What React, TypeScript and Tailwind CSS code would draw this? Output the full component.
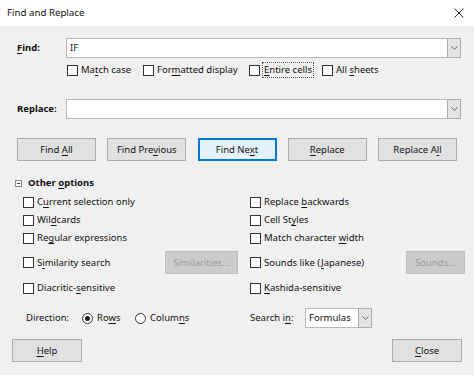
import React from "react";

const U = ({ children }: { children: React.ReactNode }) => (
  <span className="underline underline-offset-[1.5px]">{children}</span>
);

const Box = () => (
  <span className="inline-block w-[11px] h-[11px] shrink-0 border border-[#333333] bg-white" />
);

const Check = ({ children, className = "" }: { children: React.ReactNode; className?: string }) => (
  <div className={"flex items-center gap-[3px] " + className}>
    <Box />
    <span className="leading-none whitespace-nowrap">{children}</span>
  </div>
);

const Radio = ({ on, children }: { on?: boolean; children: React.ReactNode }) => (
  <div className="flex items-center gap-[4px]">
    <span className="w-[11px] h-[11px] shrink-0 rounded-full border border-[#333333] bg-white flex items-center justify-center">
      {on && <span className="w-[5px] h-[5px] rounded-full bg-[#222222]" />}
    </span>
    <span className="leading-none">{children}</span>
  </div>
);

const Btn = ({
  children,
  className = "",
  focus,
  disabled,
}: {
  children: React.ReactNode;
  className?: string;
  focus?: boolean;
  disabled?: boolean;
}) => (
  <div
    className={
      "h-[23px] flex items-center justify-center leading-none whitespace-nowrap " +
      (focus
        ? "bg-[#e5f1fb] border-2 border-[#0078d7] "
        : disabled
        ? "bg-[#cccccc] border border-[#bfbfbf] text-[#9a9a9a] "
        : "bg-[#e1e1e1] border border-[#adadad] ") +
      className
    }
  >
    <span className="leading-none whitespace-nowrap">{children}</span>
  </div>
);

const Chevron = () => (
  <svg width="7" height="4" viewBox="0 0 7 4">
    <polyline points="0.5,0.5 3.5,3.3 6.5,0.5" fill="none" stroke="#606060" strokeWidth="1" />
  </svg>
);

const Combo = ({ value }: { value?: string }) => (
  <div className="flex-1 h-[20px] flex border border-[#b8b8b8] bg-white">
    <div className="flex-1 flex items-center pl-[3px] leading-none">{value}</div>
    <div className="w-[14px] -my-px -mr-px flex items-center justify-center bg-[#e3e3e3] border border-[#adadad]">
      <Chevron />
    </div>
  </div>
);

export default function App() {
  return (
    <div className="w-[474px] h-[375px] bg-[#f0f0f0] text-[#111111] text-[9.5px] font-['Noto_Sans',sans-serif] flex flex-col overflow-hidden">
      {/* Title bar */}
      <div className="h-[26px] bg-white flex items-center justify-between pl-[7px] pr-[10px] shrink-0">
        <span className="text-[9.7px] leading-none">Find and Replace</span>
        <svg width="10" height="10" viewBox="0 0 10 10">
          <line x1="0.5" y1="0.5" x2="9.5" y2="9.5" stroke="#111" strokeWidth="0.9" />
          <line x1="9.5" y1="0.5" x2="0.5" y2="9.5" stroke="#111" strokeWidth="0.9" />
        </svg>
      </div>

      {/* Find row */}
      <div className="mt-[12px] h-[20px] flex items-center pl-[17px] pr-[13px]">
        <span className="w-[49px] font-bold leading-none">
          <U>F</U>ind:
        </span>
        <Combo value="IF" />
      </div>

      {/* Search options row */}
      <div className="mt-[5px] h-[14px] flex items-center pl-[67px]">
        <Check className="w-[76px]">
          Ma<U>t</U>ch case
        </Check>
        <Check className="w-[106px]">
          For<U>m</U>atted display
        </Check>
        <div className="w-[73px] flex items-center gap-[2px]">
          <Box />
          <span className="leading-none whitespace-nowrap border border-dotted border-[#555] px-px py-[2px]">
            <U>E</U>ntire cells
          </span>
        </div>
        <Check>
          All <U>s</U>heets
        </Check>
      </div>

      {/* Replace row */}
      <div className="mt-[22px] h-[20px] flex items-center pl-[17px] pr-[13px]">
        <span className="w-[49px] font-bold leading-none">Replace:</span>
        <Combo />
      </div>

      {/* Buttons row */}
      <div className="mt-[19px] h-[23px] flex justify-between pl-[17px] pr-[17px]">
        <Btn className="w-[79px]">
          Find <U>A</U>ll
        </Btn>
        <Btn className="w-[79px]">
          Find Pre<U>v</U>ious
        </Btn>
        <Btn className="w-[79px]" focus>
          Find Ne<U>x</U>t
        </Btn>
        <Btn className="w-[79px]">
          <U>R</U>eplace
        </Btn>
        <Btn className="w-[79px]">
          Replace A<U>l</U>l
        </Btn>
      </div>

      {/* Other options header */}
      <div className="mt-[15px] h-[14px] flex items-center pl-[15px] gap-[6px]">
        <span className="w-[7px] h-[7px] border border-[#888] bg-white flex items-center justify-center">
          <span className="w-[3px] h-px bg-[#444]" />
        </span>
        <span className="font-bold leading-none">
          Other <U>o</U>ptions
        </span>
      </div>

      {/* Options grid */}
      <div className="mt-[3px] flex flex-col pl-[23px]">
        <div className="h-[18px] flex items-center gap-[12px]">
          <div className="w-[215px]">
            <Check>
              C<U>u</U>rrent selection only
            </Check>
          </div>
          <Check>
            Replace <U>b</U>ackwards
          </Check>
        </div>
        <div className="h-[18px] flex items-center gap-[12px]">
          <div className="w-[215px]">
            <Check>
              Wil<U>d</U>cards
            </Check>
          </div>
          <Check>
            Cell St<U>y</U>les
          </Check>
        </div>
        <div className="h-[18px] flex items-center gap-[12px]">
          <div className="w-[215px]">
            <Check>
              Re<U>g</U>ular expressions
            </Check>
          </div>
          <Check>
            Match character <U>w</U>idth
          </Check>
        </div>
        <div className="mt-[4px] h-[23px] flex items-center gap-[12px]">
          <div className="w-[215px] flex items-center justify-between">
            <Check>
              S<U>i</U>milarity search
            </Check>
            <Btn className="w-[73px]" disabled>
              Similarities...
            </Btn>
          </div>
          <div className="w-[215px] flex items-center justify-between">
            <Check>
              Sounds like (<U>J</U>apanese)
            </Check>
            <Btn className="w-[59px]" disabled>
              Sounds...
            </Btn>
          </div>
        </div>
        <div className="mt-[5px] h-[18px] flex items-center gap-[12px]">
          <div className="w-[215px]">
            <Check>
              Diacritic-<U>s</U>ensitive
            </Check>
          </div>
          <Check>
            <U>K</U>ashida-sensitive
          </Check>
        </div>
      </div>

      {/* Direction / Search in */}
      <div className="mt-[11px] h-[20px] flex items-center">
        <div className="w-[250px] flex items-center pl-[26px]">
          <span className="w-[56px] leading-none">Direction:</span>
          <div className="w-[53px]">
            <Radio on>
              Ro<U>w</U>s
            </Radio>
          </div>
          <Radio>
            Colum<U>n</U>s
          </Radio>
        </div>
        <span className="w-[55px] leading-none">
          Search i<U>n</U>:
        </span>
        <div className="w-[67px] h-[20px] flex border border-[#b8b8b8] bg-white">
          <div className="flex-1 flex items-center pl-[3px] leading-none">Formulas</div>
          <div className="w-[14px] -my-px -mr-px flex items-center justify-center bg-[#e3e3e3] border border-[#adadad]">
            <Chevron />
          </div>
        </div>
      </div>

      {/* Bottom buttons */}
      <div className="mt-[11px] h-[23px] flex justify-between px-[12px]">
        <Btn className="w-[70px]">
          <U>H</U>elp
        </Btn>
        <Btn className="w-[70px]">
          <U>C</U>lose
        </Btn>
      </div>
    </div>
  );
}
